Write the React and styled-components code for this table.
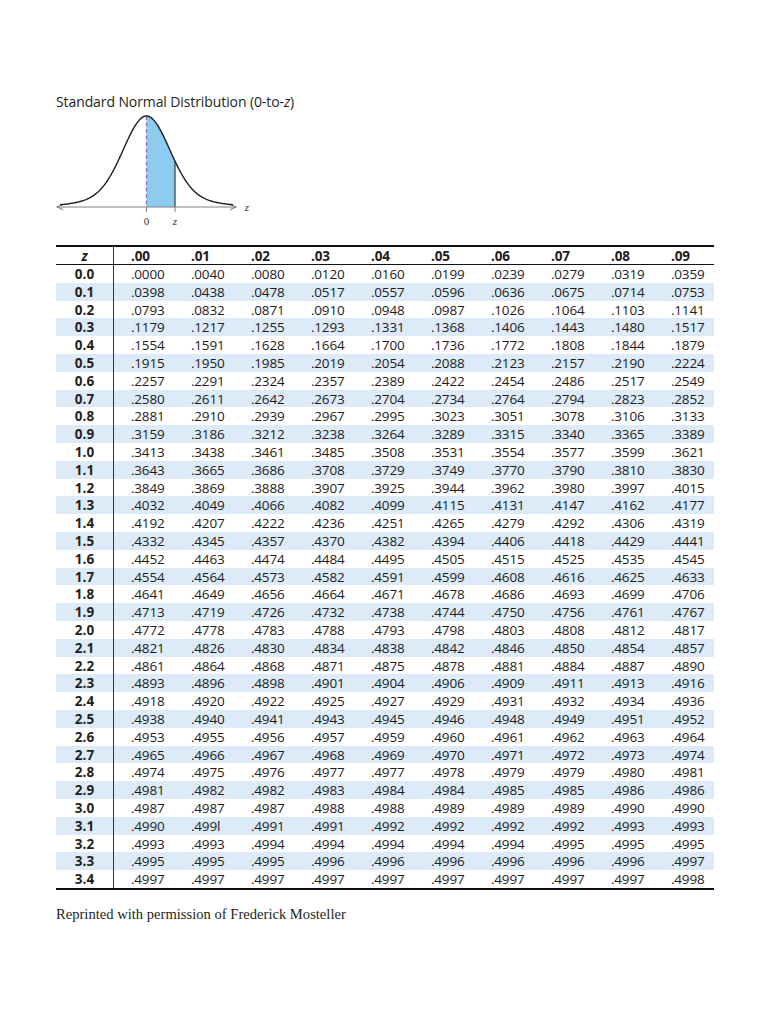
import React from 'react';
import styled, { createGlobalStyle } from 'styled-components';

const raw = `
0.0 .0000 .0040 .0080 .0120 .0160 .0199 .0239 .0279 .0319 .0359
0.1 .0398 .0438 .0478 .0517 .0557 .0596 .0636 .0675 .0714 .0753
0.2 .0793 .0832 .0871 .0910 .0948 .0987 .1026 .1064 .1103 .1141
0.3 .1179 .1217 .1255 .1293 .1331 .1368 .1406 .1443 .1480 .1517
0.4 .1554 .1591 .1628 .1664 .1700 .1736 .1772 .1808 .1844 .1879
0.5 .1915 .1950 .1985 .2019 .2054 .2088 .2123 .2157 .2190 .2224
0.6 .2257 .2291 .2324 .2357 .2389 .2422 .2454 .2486 .2517 .2549
0.7 .2580 .2611 .2642 .2673 .2704 .2734 .2764 .2794 .2823 .2852
0.8 .2881 .2910 .2939 .2967 .2995 .3023 .3051 .3078 .3106 .3133
0.9 .3159 .3186 .3212 .3238 .3264 .3289 .3315 .3340 .3365 .3389
1.0 .3413 .3438 .3461 .3485 .3508 .3531 .3554 .3577 .3599 .3621
1.1 .3643 .3665 .3686 .3708 .3729 .3749 .3770 .3790 .3810 .3830
1.2 .3849 .3869 .3888 .3907 .3925 .3944 .3962 .3980 .3997 .4015
1.3 .4032 .4049 .4066 .4082 .4099 .4115 .4131 .4147 .4162 .4177
1.4 .4192 .4207 .4222 .4236 .4251 .4265 .4279 .4292 .4306 .4319
1.5 .4332 .4345 .4357 .4370 .4382 .4394 .4406 .4418 .4429 .4441
1.6 .4452 .4463 .4474 .4484 .4495 .4505 .4515 .4525 .4535 .4545
1.7 .4554 .4564 .4573 .4582 .4591 .4599 .4608 .4616 .4625 .4633
1.8 .4641 .4649 .4656 .4664 .4671 .4678 .4686 .4693 .4699 .4706
1.9 .4713 .4719 .4726 .4732 .4738 .4744 .4750 .4756 .4761 .4767
2.0 .4772 .4778 .4783 .4788 .4793 .4798 .4803 .4808 .4812 .4817
2.1 .4821 .4826 .4830 .4834 .4838 .4842 .4846 .4850 .4854 .4857
2.2 .4861 .4864 .4868 .4871 .4875 .4878 .4881 .4884 .4887 .4890
2.3 .4893 .4896 .4898 .4901 .4904 .4906 .4909 .4911 .4913 .4916
2.4 .4918 .4920 .4922 .4925 .4927 .4929 .4931 .4932 .4934 .4936
2.5 .4938 .4940 .4941 .4943 .4945 .4946 .4948 .4949 .4951 .4952
2.6 .4953 .4955 .4956 .4957 .4959 .4960 .4961 .4962 .4963 .4964
2.7 .4965 .4966 .4967 .4968 .4969 .4970 .4971 .4972 .4973 .4974
2.8 .4974 .4975 .4976 .4977 .4977 .4978 .4979 .4979 .4980 .4981
2.9 .4981 .4982 .4982 .4983 .4984 .4984 .4985 .4985 .4986 .4986
3.0 .4987 .4987 .4987 .4988 .4988 .4989 .4989 .4989 .4990 .4990
3.1 .4990 .499l .4991 .4991 .4992 .4992 .4992 .4992 .4993 .4993
3.2 .4993 .4993 .4994 .4994 .4994 .4994 .4994 .4995 .4995 .4995
3.3 .4995 .4995 .4995 .4996 .4996 .4996 .4996 .4996 .4996 .4997
3.4 .4997 .4997 .4997 .4997 .4997 .4997 .4997 .4997 .4997 .4998
`;

const rows = raw
  .trim()
  .split('\n')
  .map((line) => line.trim().split(/\s+/));

const headers = ['.00', '.01', '.02', '.03', '.04', '.05', '.06', '.07', '.08', '.09'];

// bell curve in page coordinates (svg viewBox matches the page offsets)
// drawn a bit heavier in the tails than a pure gaussian, like the print
const MU = 146.5;
const BASE = 207;
const PEAK = 91;
const Z = 175;
const yAt = (x) => {
  const d2 = (x - MU) ** 2;
  const h = 0.85 * Math.exp(-d2 / (2 * 22.5 * 22.5)) + 0.15 * Math.exp(-d2 / (2 * 42 * 42));
  return BASE - 0.6 - (PEAK - 0.6) * h;
};

const curvePath = () => {
  let d = '';
  for (let x = 60; x <= 233; x += 1) {
    d += `${x === 60 ? 'M' : 'L'}${x},${yAt(x).toFixed(2)} `;
  }
  return d;
};

const shadePath = () => {
  let d = `M${MU},${BASE} `;
  for (let x = MU; x <= Z; x += 0.5) d += `L${x},${yAt(x).toFixed(2)} `;
  d += `L${Z},${yAt(Z).toFixed(2)} L${Z},${BASE} Z`;
  return d;
};

const App = () => {
  return (
    <>
      <GlobalStyle />
      <Page>
        <Title>
          Standard Normal Distribution (0-to-<i>z</i>)
        </Title>
        <Chart width="210" height="125" viewBox="50 108 210 125">
          <path d={shadePath()} fill="#8dcbf0" />
          <line x1={MU} y1={yAt(MU)} x2={MU} y2={BASE} stroke="#9b6cb3" strokeWidth="1.3" strokeDasharray="4 2.5" />
          <line x1={Z} y1={yAt(Z)} x2={Z} y2={BASE} stroke="#2a2a2a" strokeWidth="1.1" />
          <line x1="57" y1={BASE} x2="236" y2={BASE} stroke="#808080" strokeWidth="1" />
          <polyline points={`63,${BASE - 2.8} 57,${BASE} 63,${BASE + 2.8}`} fill="none" stroke="#808080" strokeWidth="1.1" />
          <polyline points={`230,${BASE - 2.8} 236,${BASE} 230,${BASE + 2.8}`} fill="none" stroke="#808080" strokeWidth="1.1" />
          <path d={curvePath()} fill="none" stroke="#1c1c1c" strokeWidth="1.4" />
          <line x1={MU} y1={BASE} x2={MU} y2={BASE + 5} stroke="#808080" strokeWidth="1" />
          <line x1={Z} y1={BASE} x2={Z} y2={BASE + 5} stroke="#808080" strokeWidth="1" />
          <AxisText x={MU} y="225" textAnchor="middle">0</AxisText>
          <AxisText x={Z} y="225" textAnchor="middle" $italic>z</AxisText>
          <AxisText x="247" y="211" textAnchor="middle" $italic>z</AxisText>
        </Chart>

        <Table>
          <HeadRow>
            <ZHead>z</ZHead>
            {headers.map((h) => (
              <HeadCell key={h}>{h}</HeadCell>
            ))}
          </HeadRow>
          {rows.map(([z, ...vals], i) => (
            <Row key={z} $shaded={i % 2 === 1}>
              <ZCell>{z}</ZCell>
              {vals.map((v, j) => (
                <Cell key={j}>{v}</Cell>
              ))}
            </Row>
          ))}
        </Table>

        <Credit>Reprinted with permission of Frederick Mosteller</Credit>
      </Page>
    </>
  );
};

export default App;

const GlobalStyle = createGlobalStyle`
  body {
    margin: 0;
    background: #ffffff;
    color: #231f20;
    font-family: "Open Sans", "Liberation Sans", sans-serif;
  }
`;

const Page = styled.div`
  padding: 92px 0 0 56px;
  width: 658px;
`;

const Title = styled.div`
  font-size: 14px;
  line-height: 19px;
  color: #231f20;
  letter-spacing: -0.1px;

  i {
    font-style: italic;
  }
`;

const Chart = styled.svg`
  display: block;
  margin: -3px 0 0 -6px;
`;

const AxisText = styled.text`
  font-family: "Liberation Serif", "DejaVu Serif", serif;
  font-size: 11px;
  font-style: ${(p) => (p.$italic ? 'italic' : 'normal')};
  fill: #333;
`;

const Table = styled.div`
  margin-top: 12px;
  border-top: 2px solid #111;
  border-bottom: 2px solid #111;
`;

const HeadRow = styled.div`
  display: grid;
  grid-template-columns: 58px repeat(10, 60px);
  height: 17px;
  border-bottom: 1px solid #111;
`;

const Row = styled.div`
  display: grid;
  grid-template-columns: 58px repeat(10, 60px);
  height: 17.8px;
  background: ${(p) => (p.$shaded ? '#dcebf7' : 'transparent')};
`;

const Cell = styled.div`
  display: flex;
  align-items: center;
  padding-left: 17px;
  font-size: 13.5px;
  letter-spacing: -0.2px;
  color: #1f1b1c;
`;

const HeadCell = styled(Cell)`
  font-weight: 700;
`;

const ZCell = styled.div`
  display: flex;
  align-items: center;
  justify-content: center;
  font-size: 13.5px;
  font-weight: 700;
  border-right: 1px solid #333;
`;

const ZHead = styled(ZCell)`
  font-style: italic;
`;

const Credit = styled.div`
  margin-top: 16px;
  font-family: "Liberation Serif", "Times New Roman", serif;
  font-size: 14.6px;
  color: #231f20;
`;
